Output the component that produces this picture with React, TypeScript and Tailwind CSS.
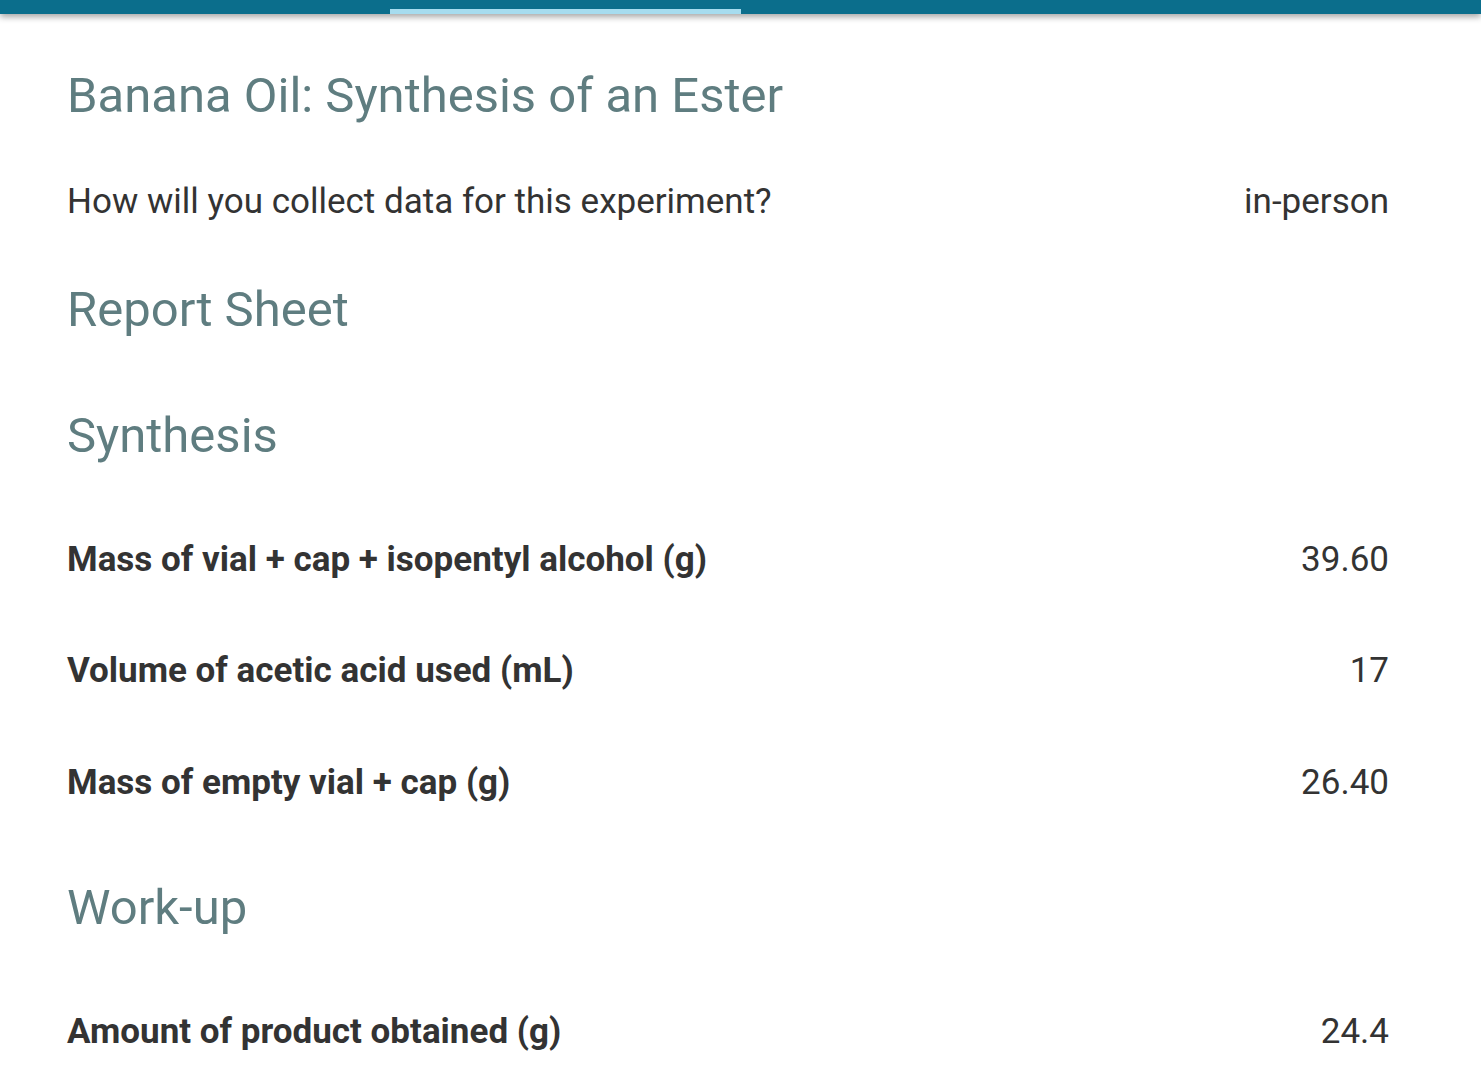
import React from "react";

const rows = [
  { kind: "title", text: "Banana Oil: Synthesis of an Ester", mt: "mt-0" },
  { kind: "question", text: "How will you collect data for this experiment?", value: "in-person", mt: "mt-[46px]" },
  { kind: "heading", text: "Report Sheet", mt: "mt-[48px]" },
  { kind: "heading", text: "Synthesis", mt: "mt-[66px]" },
  { kind: "field", text: "Mass of vial + cap + isopentyl alcohol (g)", value: "39.60", mt: "mt-[64px]" },
  { kind: "field", text: "Volume of acetic acid used (mL)", value: "17", mt: "mt-[51px]" },
  { kind: "field", text: "Mass of empty vial + cap (g)", value: "26.40", mt: "mt-[52px]" },
  { kind: "heading", text: "Work-up", mt: "mt-[65px]" },
  { kind: "field", text: "Amount of product obtained (g)", value: "24.4", mt: "mt-[64px]" },
];

export default function App() {
  return (
    <div className="min-h-screen bg-white font-['Roboto',sans-serif] overflow-hidden">
      {/* App bar with active tab indicator */}
      <div className="relative h-[14px] bg-[#0b6e8c] shadow-[0_3px_6px_rgba(0,0,0,0.35)] z-10">
        <div className="absolute left-[390px] top-[9px] h-[5px] w-[351px] bg-[#a6dcef]" />
      </div>

      <div className="pt-[51px] pl-[67px] pr-[92px]">
        {rows.map((r) => (
          <div key={r.text} className={`${r.mt} h-[60px] flex items-center justify-between`}>
            {r.kind === "title" || r.kind === "heading" ? (
              <h2 className="text-[49px] leading-none text-[#5f7d80] font-normal">{r.text}</h2>
            ) : (
              <>
                <span
                  className={`text-[35px] leading-none text-[#333333] ${
                    r.kind === "field" ? "font-bold" : "font-normal"
                  }`}
                >
                  {r.text}
                </span>
                <span className="text-[35px] leading-none text-[#333333]">{r.value}</span>
              </>
            )}
          </div>
        ))}
      </div>
    </div>
  );
}
